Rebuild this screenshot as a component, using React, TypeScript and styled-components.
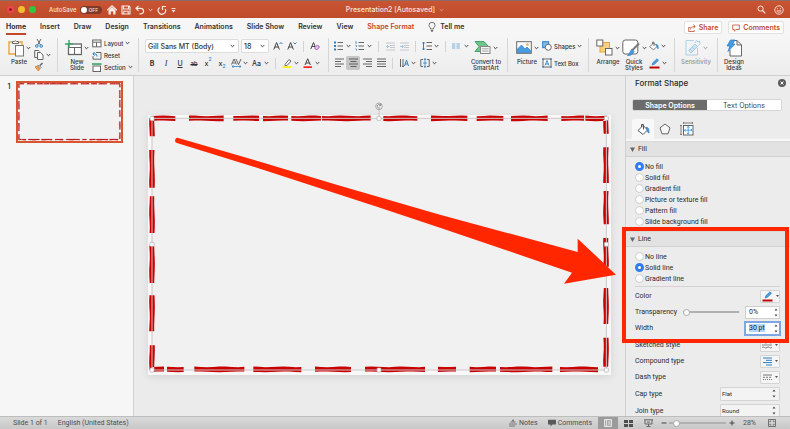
import React, { useEffect, useRef, useState } from "react";
import styled, { createGlobalStyle, css } from "styled-components";

const ui = `Inter, "Liberation Sans", sans-serif`;
const panelFont = `Roboto, "Liberation Sans", sans-serif`;

const GlobalStyle = createGlobalStyle`
  *, *::before, *::after { box-sizing: border-box; }
  body { margin: 0; background: #ebebeb; font-family: ${ui}; color: #333; }
  button, input, select { font: inherit; color: inherit; margin: 0; }
  button { border: 0; padding: 0; background: none; cursor: default; }
  svg { display: block; flex: none; }
`;

/* ---------- shell ---------- */

const Window = styled.div`
  display: flex;
  flex-direction: column;
  height: 100vh;
  overflow: hidden;
  white-space: nowrap;
`;

const TitleBar = styled.header`
  display: grid;
  grid-template-columns: 1fr auto 1fr;
  align-items: center;
  height: 18px;
  flex: none;
  padding: 0 6px;
  border-top: 1px solid #8d6c66;
  background: linear-gradient(#c95433, #bf4b2b);
  color: #f8e3dc;
  font-size: 7px;
`;

const TitleSide = styled.div<{ $end?: boolean }>`
  display: flex;
  align-items: center;
  gap: ${(p) => (p.$end ? 8 : 4)}px;
  justify-content: ${(p) => (p.$end ? "flex-end" : "flex-start")};
`;

const TitleText = styled.h1`
  display: flex;
  align-items: center;
  gap: 4px;
  margin: 0;
  font-size: 7px;
  font-weight: 500;
`;

const Lights = styled.div`
  display: flex;
  gap: 4px;
  margin: 0 9px 0 1px;
`;

const Light = styled.button<{ $color: string }>`
  display: grid;
  place-items: center;
  width: 7px;
  height: 7px;
  border-radius: 50%;
  background: ${(p) => p.$color};
`;

const SwitchLabel = styled.label`
  display: flex;
  align-items: center;
  gap: 3px;
  font-size: 6px;
  font-weight: 500;
  margin-right: 1px;
`;

const Switch = styled.span`
  display: flex;
  align-items: center;
  gap: 2px;
  width: 22px;
  height: 8px;
  padding: 0 1px;
  border-radius: 4px;
  background: #7f3a28;
  color: #f3d9d0;
  font-size: 5px;
  font-weight: 600;
`;

const SwitchInput = styled.input`
  appearance: none;
  width: 6px;
  height: 6px;
  border-radius: 50%;
  background: #fff;
`;

const TitleButton = styled.button`
  display: flex;
  align-items: center;
  gap: 3px;
`;

const TabBar = styled.nav`
  display: flex;
  align-items: center;
  height: 18px;
  flex: none;
  padding: 0 6px;
  gap: 14px;
  background: #f6f6f6;
  font-size: 7px;
  font-weight: 600;
`;

const Tab = styled.a<{ $active?: boolean; $accent?: boolean }>`
  display: flex;
  align-items: center;
  gap: 4px;
  height: 15px;
  margin-top: 1px;
  color: ${(p) => (p.$accent ? "#c2492b" : "#333")};
  font-weight: ${(p) => (p.$active ? 700 : 600)};
  text-decoration: none;
  border-bottom: 2px solid ${(p) => (p.$active ? "#c2492b" : "transparent")};
`;

const TabActions = styled.div`
  display: flex;
  gap: 6px;
  margin-left: auto;
`;

const PillButton = styled.button`
  display: flex;
  align-items: center;
  gap: 3px;
  height: 13px;
  margin-top: 1px;
  padding: 0 3px;
  border: 1px solid #e2e2e2;
  border-radius: 2px;
  background: #fff;
  color: #c2492b;
  font-weight: 600;
`;

/* ---------- ribbon ---------- */

const Ribbon = styled.div`
  display: flex;
  height: 40px;
  flex: none;
  padding: 1px 6px 2px;
  background: linear-gradient(#f6f6f6, #ededed);
  border-bottom: 1px solid #cfcfcf;
  font-size: 6px;
  font-weight: 500;
`;

const Divider = styled.i`
  width: 1px;
  height: 34px;
  flex: none;
  margin: 1px 6px;
  background: #d6d6d6;
`;

const MiniDivider = styled.i`
  width: 1px;
  height: 11px;
  flex: none;
  margin: 0 4px;
  background: #d3d3d3;
`;

const BigButton = styled.button<{ $width: number; $faded?: boolean }>`
  display: flex;
  flex-direction: column;
  align-items: center;
  width: ${(p) => p.$width}px;
  flex: none;
  padding-top: 1px;
  line-height: 6px;
  ${(p) => p.$faded && css`opacity: 0.5;`}
`;

const BigTop = styled.span`
  display: flex;
  align-items: center;
  gap: 2px;
  height: 19px;
  margin-bottom: 2px;
`;

const Stack = styled.div<{ $rows?: 2 | 3; $width: number }>`
  display: flex;
  flex-direction: column;
  gap: ${(p) => (p.$rows === 2 ? 1 : 0)}px;
  width: ${(p) => p.$width}px;
  flex: none;
  margin-left: 2px;
  padding-top: ${(p) => (p.$rows === 2 ? 1 : 0)}px;
`;

const StackButton = styled.button<{ $tall?: boolean }>`
  display: flex;
  align-items: center;
  gap: 2px;
  height: ${(p) => (p.$tall ? 16 : 12)}px;
`;

const Rows = styled.div<{ $pull?: boolean }>`
  display: flex;
  flex-direction: column;
  gap: 1px;
  flex: none;
  padding-top: 1px;
  margin-left: ${(p) => (p.$pull ? -3 : 0)}px;
`;

const Row = styled.div`
  display: flex;
  align-items: center;
  height: 16px;
`;

const Tool = styled.button<{ $wide?: boolean; $active?: boolean }>`
  display: flex;
  align-items: center;
  justify-content: ${(p) => (p.$wide ? "space-between" : "center")};
  width: ${(p) => (p.$wide ? 21 : 14)}px;
  height: 14px;
  padding: 0 ${(p) => (p.$wide ? 2 : 0)}px;
  border-radius: 2px;
  background: ${(p) => (p.$active ? "#c6c6c6" : "none")};
  font-size: 7px;
`;

const Combo = styled.span<{ $width: number }>`
  display: flex;
  align-items: center;
  position: relative;
  width: ${(p) => p.$width}px;
  height: 14px;
  margin-right: 2px;
  border: 1px solid #dcdcdc;
  border-radius: 2px;
  background: #fff;
  font-size: 7px;
`;

const ComboSelect = styled.select`
  appearance: none;
  width: 100%;
  height: 12px;
  padding: 0 2px;
  border: 0;
  background: none;
  outline: none;
`;

const ComboMark = styled.span`
  position: absolute;
  right: 3px;
  pointer-events: none;
`;

const Bold = styled.b`font-weight: 700;`;
const Italic = styled.i`font-family: "Liberation Serif", serif; font-size: 8px;`;
const Under = styled.u`text-underline-offset: 1px;`;
const Strike = styled.s`font-size: 6px;`;
const Small = styled.span<{ $low?: boolean }>`
  color: #2d7fc4;
  font-size: 5px;
  align-self: ${(p) => (p.$low ? "flex-end" : "flex-start")};
  line-height: 7px;
`;

/* ---------- work area ---------- */

const Work = styled.main`
  display: flex;
  flex: 1;
  min-height: 0;
  overflow: hidden;
`;

const Thumbs = styled.aside`
  display: flex;
  align-items: flex-start;
  gap: 4px;
  width: 134px;
  flex: none;
  padding: 5px 10px 0 6px;
  border-right: 1px solid #d2d2d2;
  background: #f6f6f6;
  font-size: 7px;
  font-weight: 600;
`;

const ThumbNumber = styled.span`
  width: 6px;
  margin-top: 1px;
  text-align: center;
`;

const Thumb = styled.button`
  flex: 1;
  border: 2px solid #d9552f;
  background: #f1f1f1;
`;

const Canvas = styled.section`
  display: flex;
  align-items: center;
  flex: 1;
  min-width: 0;
  padding: 0 14px 2px;
  background: #ebebeb;
`;

const Slide = styled.div`
  position: relative;
  z-index: 2;
  flex: 1;
  background: #f1f1f1;
  border-radius: 1px;
  box-shadow: 0 2px 8px rgba(0, 0, 0, 0.1);
`;

const SlideArt = styled.svg`
  width: 100%;
  height: auto;
  overflow: visible;
`;

/* ---------- format panel ---------- */

const Panel = styled.aside`
  width: 165px;
  flex: none;
  border-left: 1px solid #d0d0d0;
  background: #ececec;
  font-family: ${panelFont};
  font-size: 7px;
  color: #2b2b2b;
`;

const PanelHead = styled.div`
  display: flex;
  align-items: center;
  justify-content: space-between;
  height: 14px;
  padding: 0 4px 0 9px;
`;

const PanelTitle = styled.h2`
  margin: 0;
  font-family: ${ui};
  font-size: 8px;
  font-weight: 500;
`;

const Segments = styled.div`
  display: flex;
  height: 12px;
  margin: 9px 8px 8px 6px;
  border: 1px solid #d5d5d5;
  border-radius: 2px;
  background: #fff;
  overflow: hidden;
`;

const Segment = styled.button<{ $active?: boolean }>`
  flex: 1;
  font-family: ${ui};
  font-weight: ${(p) => (p.$active ? 600 : 400)};
  background: ${(p) => (p.$active ? "#6c6c6c" : "#fff")};
  color: ${(p) => (p.$active ? "#fff" : "#444")};
`;

const IconTabs = styled.div`
  display: flex;
  height: 22px;
  padding-left: 6px;
  border-bottom: 2px solid #f8f8f8;
`;

const IconTab = styled.button<{ $active?: boolean }>`
  display: grid;
  place-items: center;
  width: 22px;
  border-radius: 2px 2px 0 0;
  background: ${(p) => (p.$active ? "#f8f8f8" : "none")};
`;

const SectionHead = styled.button`
  display: flex;
  align-items: center;
  gap: 3px;
  width: 100%;
  height: 16px;
  padding-left: 4px;
  border-top: 1px solid #d9d9d9;
  border-bottom: 1px solid #d0d0d0;
  background: #e2e2e2;
  font-size: 7px;
`;

const Radios = styled.div`
  display: flex;
  flex-direction: column;
  padding: 4px 0 4px 9px;
`;

const RadioLabel = styled.label`
  display: flex;
  align-items: center;
  gap: 1px;
  height: 11px;
`;

const Radio = styled.input`
  appearance: none;
  width: 9px;
  height: 9px;
  border: 1px solid #cdcdcd;
  border-radius: 50%;
  background: #fff;
  &:checked {
    border: 3px solid #2f7df6;
  }
`;

const LineSection = styled.section`
  position: relative;
  margin-bottom: 1px;
`;

const Highlight = styled.div`
  position: absolute;
  inset: -4px 1px -7px -4px;
  border: 4px solid #ff2600;
  pointer-events: none;
`;

const Rule = styled.hr`
  height: 1px;
  margin: -2px 10px 1px 9px;
  border: 0;
  background: #d3d3d3;
`;

const Field = styled.div<{ $tall?: boolean }>`
  display: flex;
  align-items: center;
  justify-content: space-between;
  gap: 6px;
  height: ${(p) => (p.$tall ? 17 : 16)}px;
  padding: 0 10px 0 9px;
`;

const Swatch = styled.button`
  display: flex;
  align-items: center;
  justify-content: center;
  gap: 3px;
  width: 20px;
  height: 13px;
  border: 1px solid #d4d4d4;
  border-radius: 1px;
  background: #f5f5f5;
`;

const PickWrap = styled.span`
  display: flex;
  align-items: center;
  position: relative;
  width: 60px;
  height: 14px;
  border: 1px solid #d4d4d4;
  border-radius: 1px;
  background: #f3f3f3;
`;

const Pick = styled(ComboSelect)`
  font-size: 6px;
  padding: 0 1px;
`;

const Spin = styled.span<{ $focus?: boolean }>`
  display: flex;
  align-items: center;
  width: 35px;
  height: 13px;
  flex: none;
  border: 1px solid #cfcfcf;
  background: #fff;
  ${(p) => p.$focus && css`border-color: #7ea6e6; box-shadow: 0 0 0 1px #7ea6e6;`}
`;

const SpinInput = styled.input`
  flex: 1;
  min-width: 0;
  height: 9px;
  padding: 0 0 0 3px;
  border: 0;
  outline: none;
  background: none;
  &::selection {
    background: #b2d6fd;
    color: #222;
  }
`;

const Stepper = styled.button`
  margin-right: 1px;
`;

const Range = styled.input<{ $fill?: boolean }>`
  appearance: none;
  flex: ${(p) => (p.$fill ? "1" : "none")};
  width: 57px;
  min-width: 0;
  height: 7px;
  background: linear-gradient(#b0b0b0, #b0b0b0) center / 100% 2px no-repeat;
  &::-webkit-slider-thumb {
    appearance: none;
    width: 7px;
    height: 7px;
    border: 1px solid #a9a9a9;
    border-radius: 50%;
    background: #fff;
  }
`;

/* ---------- status bar ---------- */

const StatusBar = styled.footer`
  display: flex;
  align-items: center;
  height: 13px;
  flex: none;
  padding: 0 14px 0 13px;
  border-top: 1px solid #bdbdbd;
  background: linear-gradient(#dadada, #c8c8c8);
  font-family: ${panelFont};
  font-size: 7px;
  color: #4d4d4d;
`;

const StatusGroup = styled.div`
  display: flex;
  align-items: center;
  gap: 10px;
  margin-right: 6px;
`;

const StatusItem = styled.button`
  display: flex;
  align-items: center;
  gap: 2px;
`;

const StatusTools = styled.div`
  display: flex;
  align-items: center;
  height: 100%;
  margin-left: auto;
`;

const ViewButton = styled.button<{ $active?: boolean }>`
  display: grid;
  place-items: center;
  width: 20px;
  height: 100%;
  background: ${(p) => (p.$active ? "#9b9b9b" : "none")};
`;

const ZoomValue = styled.output`
  margin: 0 12px 0 6px;
`;

const ZoomStep = styled.button`
  width: 11px;
  display: grid;
  place-items: center;
`;

/* ---------- icons ---------- */

const Chevron = ({ color = "#444" }: { color?: string }) => (
  <svg width="5" height="4" viewBox="0 0 5 4" fill="none" stroke={color}>
    <path d="M.7 1l1.8 1.8L4.3 1" />
  </svg>
);
const Caret = () => (
  <svg width="3" height="2" viewBox="0 0 3 2"><path d="M0 0h3L1.5 2z" fill="#555" /></svg>
);
const UpDown = () => (
  <svg width="4" height="9" viewBox="0 0 4 9" fill="#444">
    <path d="M2 .6l1.5 2h-3zM2 8.4l1.5-2h-3z" />
  </svg>
);
const Line = ({ w = 10, h = 10, color = "#666", children }: any) => (
  <svg width={w} height={h} viewBox={`0 0 ${w} ${h}`} fill="none" stroke={color}>{children}</svg>
);

const PasteIcon = () => (
  <Line w={16} h={18}>
    <path d="M4 3H1v12h6M11 3h3v3" stroke="#eda33b" strokeWidth="1.4" />
    <path d="M4.5 4.5v-2h2a1.2 1.2 0 012 0h2v2z" fill="#fff" />
    <rect x="7.5" y="6.5" width="8" height="10.5" fill="#fff" stroke="#777" />
  </Line>
);
const CutIcon = () => (
  <Line><path d="M3 1l3.5 6M7 1L3.5 7" /><circle cx="2.8" cy="8" r="1.3" stroke="#2d7fc4" /><circle cx="7.2" cy="8" r="1.3" stroke="#2d7fc4" /></Line>
);
const CopyIcon = () => (
  <Line><path d="M3 7.5H.7v-7h4l1 1" /><path d="M3.5 2.5h3l2.5 2.500v4.500h-5.500z" fill="#fff" /></Line>
);
const BrushIcon = () => (
  <Line><path d="M6 3.500L8.500 1" strokeWidth="1.600" /><path d="M4.500 3l2.500 2.500-1 1L3.500 4z" fill="#fff" /><path d="M1 5l2-.8L5.500 7 4.500 9z" fill="#f4a24f" stroke="#e08a30" /></Line>
);
const NewSlideIcon = () => (
  <Line w={17} h={18}>
    <rect x="3.500" y="5" width="13" height="10.500" fill="#fff" strokeWidth="1.300" />
    <path d="M4 8.500h12M9.500 8.500V15" />
    <path d="M4 1v8M0 5h8" stroke="#35a76a" strokeWidth="1.400" />
  </Line>
);
const LayoutIcon = () => (
  <Line w={10} h={9}><rect x=".7" y="1" width="8.300" height="6.800" fill="#fff" /><path d="M1 3.200h8M4.500 3.200V8" /></Line>
);
const ResetIcon = () => (
  <Line w={10} h={9}><path d="M4 1.500h5v6.700H1V5" /><path d="M5 5.500C5 3 3.500 2.500 1 3M2.500 1L.8 3l2 1.500" stroke="#2d7fc4" /></Line>
);
const SectionIcon = () => (
  <Line w={10} h={9}><path d="M0 1h9.500" stroke="#35a76a" strokeWidth="1.600" /><rect x="1" y="3" width="7.500" height="5.500" fill="#fff" /></Line>
);
const GrowIcon = ({ down }: { down?: boolean }) => (
  <Line><path d="M.8 8.500L3.600 1.500l2.800 7M1.800 6h3.600" stroke="#444" /><path d={down ? "M6.500 1.500L8 3l1.500-1.500" : "M6.500 3L8 1.500 9.500 3"} stroke="#2d7fc4" /></Line>
);
const ClearIcon = () => (
  <Line><path d="M.8 8L3.500 1.500 5 5M1.800 5.500H5" stroke="#444" /><path d="M4.500 7L7.500 4 9.500 6 6.500 9z" stroke="#a453b8" fill="#e5c6ec" /></Line>
);
const HighlightIcon = () => (
  <Line><path d="M3 6.500L7 1.500l2 1.500-4 4.500H3z" stroke="#666" fill="#fff" /><path d="M.5 9.200h8.500" stroke="#fff200" strokeWidth="1.800" /></Line>
);
const FontColorIcon = () => (
  <Line><path d="M2 7L4.700.8 7.400 7M3 5h3.500" stroke="#444" /><path d="M.5 9.200h8.500" stroke="#f22" strokeWidth="1.800" /></Line>
);
const SpacingIcon = () => (
  <Line w={11}><path d="M.5 6.500L3 1l2.500 5.500M1.500 5h3M5 1l2.500 5.500L10 1" stroke="#444" strokeWidth=".8" /><path d="M1 8.500h9M2.500 7.200L1 8.500l1.500 1M8.500 7.200l1.500 1.300-1.500 1" stroke="#2d7fc4" strokeWidth=".8" /></Line>
);
const BulletsIcon = () => (
  <Line><path d="M0 1.500h2M0 5h2M0 8.500h2" stroke="#2d7fc4" strokeWidth="1.800" /><path d="M3.500 1.500H9M3.500 5H9M3.500 8.500H9" /></Line>
);
const NumbersIcon = () => (
  <Line><path d="M1 0v3M.5 4.500h1V6M.5 8h1v1.500" stroke="#2d7fc4" strokeWidth=".8" /><path d="M3.500 1.500H9M3.500 5H9M3.500 8.500H9" /></Line>
);
const IndentIcon = ({ flip }: { flip?: boolean }) => (
  <Line w={9} h={9} color="#c4c8cc"><path d="M0 1h9M4 3.500h5M4 5.500h5M0 8h9" /><path d={flip ? "M0 4.500h3M2 3l1.500 1.500L2 6" : "M3.500 4.500H.5M2 3L.5 4.500 2 6"} stroke="#9ec6e4" /></Line>
);
const LineSpacingIcon = () => (
  <Line><path d="M1.500 1v8M.2 2.500L1.500 1l1.300 1.500M.2 7.500L1.500 9l1.300-1.500" stroke="#2d7fc4" /><path d="M4.500 1.500H10M4.500 5H10M4.500 8.500H10" /></Line>
);
const ColumnsIcon = () => (
  <Line w={8} h={8} color="#6ba6d6"><path d="M0 2h3.300M0 4h3.300M0 6h3.300M4.500 2h3.300M4.500 4h3.300M4.500 6h3.300" strokeWidth=".9" /></Line>
);
const AlignIcon = ({ kind }: { kind: "l" | "c" | "r" | "j" }) => {
  const d = {
    l: "M0 1h9M0 3.500h6M0 6h9M0 8.500h6",
    c: "M0 1h9M1.500 3.500h6M0 6h9M1.500 8.500h6",
    r: "M0 1h9M3 3.500h6M0 6h9M3 8.500h6",
    j: "M0 1h9M0 3.500h9M0 6h9M0 8.500h9",
  }[kind];
  return <Line w={9} color="#555"><path d={d} strokeWidth=".9" /></Line>;
};
const DirectionIcon = () => (
  <Line><path d="M1.500 1v8M4 1v8M2.800 7.800L4 9l1.200-1.200" /><path d="M5.500 8L7.500 2l2 6M6.200 6h2.600" stroke="#2d7fc4" /></Line>
);
const AlignTextIcon = () => (
  <Line><path d="M3 1.500H.8v7H3M7 1.500h2.200v7H7" /><path d="M5 0v10M3 5h4M3.800 2L5 .8 6.200 2M3.800 8L5 9.200 6.200 8" stroke="#2d7fc4" strokeWidth=".8" /></Line>
);
const SmartArtIcon = () => (
  <Line w={17} h={15}>
    <path d="M1 1.500h9l4.500 5-4.500 5H1l4-5z" fill="#6fc48c" stroke="#3fa365" />
    <rect x="6.500" y="6.500" width="9.500" height="7" fill="#f4f4f4" stroke="#888" />
    <path d="M8 8.800h6.500M8 11h6.500" stroke="#aaa" />
  </Line>
);
const PictureIcon = () => (
  <Line w={16} h={13}>
    <rect x=".7" y=".7" width="14.600" height="11.600" fill="#fff" />
    <path d="M1.500 11.500V8L5.500 4l3.500 4 2-2 3.500 3.500v2z" fill="#4a9ce0" stroke="#2d7fc4" strokeWidth=".7" />
    <circle cx="11.500" cy="3.500" r="1.300" fill="#f3a64a" stroke="none" />
  </Line>
);
const ShapesIcon = () => (
  <Line><rect x=".7" y=".7" width="6" height="6" fill="#7db9ea" stroke="#2d7fc4" /><circle cx="6.300" cy="6.300" r="3" fill="#fff" /></Line>
);
const TextBoxIcon = () => (
  <Line><rect x="1" y="1" width="8" height="8" fill="#fff" /><path d="M3 7.500L5 2.500l2 5M3.700 6h2.600" stroke="#2d7fc4" strokeWidth=".9" /><path d="M0 1h2M8 1h2M0 9h2M8 9h2" stroke="#2d7fc4" /></Line>
);
const ArrangeIcon = () => (
  <Line w={17} h={17}>
    <rect x="4" y="3.500" width="9.500" height="9.500" fill="#f8cf85" stroke="#eda33b" />
    <rect x=".8" y="1" width="6" height="6" fill="#fff" /><rect x="9.500" y="9.500" width="6.500" height="6.500" fill="#fff" />
  </Line>
);
const StylesIcon = () => (
  <Line w={18} h={18}>
    <rect x=".8" y="1" width="15" height="14" rx="2.500" fill="#fff" />
    <path d="M17 4.500L9.500 12" stroke="#777" strokeWidth="2" />
    <path d="M10 10.500l2 2c-1.500 3.500-4 4-6.500 4 2.500-1.500 2-4.500 4.500-6z" fill="#4a9ce0" stroke="#2d7fc4" strokeWidth=".8" />
  </Line>
);
const BucketIcon = ({ w = 10 }: { w?: number }) => (
  <svg width={w} height={w} viewBox="0 0 13 13" fill="none" stroke="#555">
    <path d="M1 7.500L6 2.500l4.500 4.500-4.500 4.500zM4.500 4V1.500h2v5" fill="#fff" />
    <path d="M9 4.500c2.500-.5 3 1.500 3 5.500-1.500 0-1.500-2.500-2-3.500z" fill="#4a9ce0" stroke="#2d7fc4" strokeWidth=".8" />
  </svg>
);
const PenIcon = ({ color = "#c00000" }: { color?: string }) => (
  <Line w={11} h={11}>
    <path d="M3 7l1-2.500L8 .8l1.500 1.500L5.500 6.200z" fill="#4a9ce0" stroke="#2d7fc4" strokeWidth=".7" />
    <path d="M.5 9.500h10" stroke={color} strokeWidth="2" />
  </Line>
);
const SensitivityIcon = () => (
  <Line w={16} h={17} color="#5aa9dc">
    <path d="M9 1.500H1v14.500h11.500V9" strokeWidth=".9" />
    <path d="M3.500 11.500L10 5l2.500 2.500L6 14z" fill="#a9d2ee" />
    <path d="M10 4l1.500-2.500L13 3l1.500-1 .5 2.500-1.500 2" /><path d="M5 10l3 3M7 8l3 3" strokeWidth=".7" />
  </Line>
);
const IdeasIcon = () => (
  <Line w={17} h={18}>
    <path d="M6.500 4.500V1.500H11l4.500 4.500v11H4V11M11 1.500V6h4.500" fill="#fff" />
    <path d="M4.500 1H9L6.500 5H9L2 12.500 4 7H1z" fill="#4a9ce0" stroke="#2d7fc4" strokeWidth=".8" />
  </Line>
);
const HomeIcon = () => (
  <Line color="#fbe9e3"><path d="M0 5.300L5 .9l5 4.400" strokeWidth="1.200" /><path d="M1.500 5L5 2l3.500 3v4.500H6.200v-3H3.800v3H1.500z" fill="#fbe9e3" stroke="none" /></Line>
);
const SaveIcon = () => (
  <Line color="#fbe9e3"><path d="M1 1h7l1 1v7H1zM2.500 1v3h5V1M2.800 9V6.300h4.400V9" strokeWidth="1.100" /></Line>
);
const UndoIcon = () => (
  <Line color="#fbe9e3"><path d="M3.500.8L1 3.300l2.500 2.500M1.200 3.300h4.300c4 0 4 5.500.5 5.500H4.500" strokeWidth="1.200" /></Line>
);
const RedoIcon = () => (
  <Line color="#fbe9e3"><path d="M2.700 2.500A3.700 3.700 0 108.300 4M5.500 5V1.500H9" strokeWidth="1.200" /></Line>
);
const MoreIcon = () => (
  <Line w={5} h={6} color="#fbe9e3"><path d="M.5 1.500h4" strokeWidth=".9" /><path d="M.5 3h4l-2 2.500z" fill="#fbe9e3" stroke="none" /></Line>
);
const SearchIcon = () => (
  <Line w={9} h={9} color="#fbe9e3"><circle cx="3.600" cy="3.600" r="2.600" /><path d="M5.500 5.500L8.300 8.300" strokeWidth="1.200" /></Line>
);
const SmileIcon = () => (
  <Line color="#fbe9e3"><circle cx="5" cy="5" r="4.200" strokeWidth=".9" /><path d="M2.800 5.800c.6 2 3.800 2 4.400 0zM3.500 3v1.200M6.500 3v1.200" strokeWidth=".8" /></Line>
);
const BulbIcon = () => (
  <Line w={8} color="#555"><path d="M2.700 7C2.700 5.500 1 5 1 3.300a3 3 0 016 0C7 5 5.300 5.500 5.300 7zM2.700 8.500h2.600M3.200 9.600h1.600" strokeWidth=".8" /></Line>
);
const ShareIcon = () => (
  <Line w={8} h={8} color="#c2492b"><path d="M2.500 3.500H.7v4h5.500V6M2.500 5.500C2.500 3.500 4 2.500 7 2.500M5.300.7l2 1.800-2 1.800" strokeWidth=".8" /></Line>
);
const BubbleIcon = () => (
  <Line w={8} h={8} color="#c2492b"><path d="M.7 1h6.600v4.500H4L2.300 7.200V5.500H.7z" strokeWidth=".8" /></Line>
);
const CloseIcon = () => (
  <svg width="8" height="8" viewBox="0 0 8 8"><circle cx="4" cy="4" r="4" fill="#5b5b5b" /><path d="M2.500 2.500l3 3M5.500 2.500l-3 3" stroke="#fff" /></svg>
);
const PentagonIcon = () => (
  <Line w={12} h={12} color="#555"><path d="M6 1l5 3.800-2 6H3l-2-6z" fill="#f6f6f6" strokeWidth=".9" /></Line>
);
const SizeIcon = () => (
  <Line w={14} h={14}>
    <path d="M3.500 1h9M3.500 0v2M12.500 0v2M1 3.500v9M0 3.500h2M0 12.500h2" strokeWidth=".8" />
    <rect x="3.500" y="3.500" width="9.500" height="9.500" fill="#fff" />
    <path d="M8.200 4.500v7.500M4.500 8.200h7.500M7 5.500l1.200-1 1.200 1M7 11l1.200 1 1.200-1M5.500 7l-1 1.200 1 1.200M11 7l1 1.200-1 1.200" stroke="#2d8fe0" strokeWidth=".8" />
  </Line>
);
const Triangle = () => (
  <svg width="5" height="5" viewBox="0 0 5 5"><path d="M0 .5h5L2.500 5z" fill="#666" /></svg>
);
const SketchIcon = () => (
  <Line w={10} h={8} color="#666"><path d="M0 1.500q1.200-1 2.500 0t2.500 0 2.500 0 2.500 0M0 4h10M0 6.500q1.200-1 2.500 0t2.500 0 2.500 0 2.500 0" strokeWidth=".8" /></Line>
);
const CompoundIcon = () => (
  <Line w={9} h={9} color="#2d7fc4"><path d="M0 1h9M3 3.300h6M0 5.600h9M3 8h6" strokeWidth="1" /></Line>
);
const DashIcon = () => (
  <Line w={9} h={7} color="#777"><path d="M0 1h9" /><path d="M0 3.300h9" strokeDasharray="2 1" /><path d="M0 5.500h9" strokeDasharray="1 1" /></Line>
);
const NotesIcon = () => (
  <Line w={8} h={8} color="#777"><path d="M0 5h8M0 7h6M1.500 3h5" /><path d="M4 0l1.500 2.500h-3z" fill="#777" stroke="none" /></Line>
);
const SolidBubble = () => (
  <svg width="8" height="8" viewBox="0 0 8 8"><path d="M0 .8h8v4.700H4.500L2.500 7.500v-2H0z" fill="#5a5a5a" /></svg>
);
const NormalView = () => (
  <Line w={8} h={8} color="#fff"><rect x=".7" y=".7" width="6.600" height="6.600" strokeWidth=".9" /><path d="M2.700 1v6M4 3h2.500M4 5h2.500" strokeWidth=".8" /></Line>
);
const SorterView = () => (
  <svg width="9" height="7" viewBox="0 0 9 7"><path d="M0 0h4v3H0zM5 0h4v3H5zM0 4h4v3H0zM5 4h4v3H5z" fill="#4f4f4f" /></svg>
);
const ShowView = () => (
  <Line w={9} h={8} color="#5a5a5a"><path d="M0 .8h9M1 1v4h7V1M4.500 5v2M2.500 7.500h4M3 3h3" strokeWidth=".9" /></Line>
);
const FitIcon = () => (
  <Line w={8} h={8} color="#5a5a5a"><rect x=".6" y=".6" width="6.800" height="6.800" strokeWidth=".8" /><path d="M2 3.200V2h1.200M4.800 2H6v1.200M6 4.800V6H4.800M3.200 6H2V4.800" strokeWidth=".8" /></Line>
);

/* ---------- slide drawing (three units per pixel) ---------- */

const TOP = [[33, 106], [147, 251], [280, 357], [369, 444], [454, 543], [546, 692], [730, 832], [873, 982], [1010, 1090], [1113, 1223], [1264, 1332], [1336, 1400]];
const BOTTOM = [[36, 72], [81, 131], [163, 313], [340, 484], [525, 633], [675, 855], [894, 948], [989, 1068], [1080, 1237], [1260, 1374]];
const LEFT = [[55, 109], [150, 263], [289, 399], [437, 549], [586, 694], [736, 810]];
const RIGHT = [[60, 101], [142, 249], [273, 373], [414, 500], [564, 672], [713, 800]];
const HANDLES = [[36, 55], [717, 55], [1399, 55], [36, 433], [1399, 433], [36, 810], [717, 810], [1399, 810]];

/** A hand-drawn bar between two points of an axis, with slightly uneven sides. */
function bar(from: number, to: number, center: number, vertical: boolean) {
  const upper: string[] = [];
  const lower: string[] = [];
  const steps = Math.max(2, Math.round((to - from) / 18));
  for (let i = 0; i <= steps; i++) {
    const at = from + ((to - from) * i) / steps;
    const a = center - 7.5 + Math.sin(at * 0.07);
    const b = center + 7.5 + Math.sin(at * 0.05 + 2);
    upper.push(vertical ? `${a} ${at}` : `${at} ${a}`);
    lower.unshift(vertical ? `${b} ${at}` : `${at} ${b}`);
  }
  return `M${upper.concat(lower).join("L")}Z`;
}

const BORDER = [
  ...TOP.map(([a, b]) => bar(a, b, 55, false)),
  ...BOTTOM.map(([a, b]) => bar(a, b, 808, false)),
  ...LEFT.map(([a, b]) => bar(a, b, 36, true)),
  ...RIGHT.map(([a, b]) => bar(a, b, 1398, true)),
].join("");

function SlideDrawing({ editing }: { editing?: boolean }) {
  return (
    <SlideArt viewBox="24 45 1389 780" aria-hidden="true">
      <path d="M24 45H1413V825H24z" fill="#f8f8f8" />
      <path d="M36 55H1399V810H36z" fill="#f1f1f1" />
      <path d={BORDER} fill={editing ? "#c80000" : "#bb1c20"} stroke={editing ? "none" : "#bb1c20"} strokeWidth="3" />
      {editing && (
        <>
          <path d="M36 55H1399V810H36zM717 55V30" fill="none" stroke="#cfc6c6" strokeWidth="3" />
          {HANDLES.map(([x, y]) => (
            <rect key={`${x}-${y}`} x={x - 6} y={y - 6} width="12" height="12" rx="2" fill="#fff" stroke="#aaa" strokeWidth="2" />
          ))}
          <circle cx="717" cy="19" r="10" fill="#f4f4f4" stroke="#999" strokeWidth="2.500" />
          <path d="M721 23a5.500 5.500 0 11 1-7M722 12v5h-5" fill="none" stroke="#666" strokeWidth="2" />
          <path
            d="M115 114L360 185L600 257L900 344L1313 456V416L1428 524L1272 551L1296 518L900 383L720 323L360 206L111 129A7 7 0 01115 114z"
            fill="#ff2600"
          />
        </>
      )}
    </SlideArt>
  );
}

/* ---------- composed parts ---------- */

const TABS = ["Home", "Insert", "Draw", "Design", "Transitions", "Animations", "Slide Show", "Review", "View"];
const FILLS = ["No fill", "Solid fill", "Gradient fill", "Picture or texture fill", "Pattern fill", "Slide background fill"];
const LINES = ["No line", "Solid line", "Gradient line"];

function RadioList({ name, options, initial }: { name: string; options: string[]; initial: string }) {
  const [value, setValue] = useState(initial);
  return (
    <Radios role="radiogroup" aria-label={name}>
      {options.map((o) => (
        <RadioLabel key={o}>
          <Radio type="radio" name={name} checked={value === o} onChange={() => setValue(o)} />
          {o}
        </RadioLabel>
      ))}
    </Radios>
  );
}

function BigTool({ icon, lines, width = 26, faded, menu = true }: { icon: React.ReactNode; lines: string[]; width?: number; faded?: boolean; menu?: boolean }) {
  return (
    <BigButton $width={width} $faded={faded}>
      <BigTop>{icon}{menu && <Chevron />}</BigTop>
      {lines.map((l) => <span key={l}>{l}</span>)}
    </BigButton>
  );
}

function MenuTool({ label, children }: { label: string; children: React.ReactNode }) {
  return <Tool $wide aria-label={label}>{children}<Chevron /></Tool>;
}

function RibbonBar() {
  return (
    <Ribbon>
      <BigTool icon={<PasteIcon />} lines={["Paste"]} />
      <Stack $width={17}>
        <StackButton aria-label="Cut"><CutIcon /></StackButton>
        <StackButton aria-label="Copy"><CopyIcon /><Chevron /></StackButton>
        <StackButton aria-label="Format painter"><BrushIcon /></StackButton>
      </Stack>
      <Divider />
      <BigTool icon={<NewSlideIcon />} lines={["New", "Slide"]} />
      <Stack $width={40}>
        <StackButton><LayoutIcon />Layout<Chevron /></StackButton>
        <StackButton><ResetIcon />Reset</StackButton>
        <StackButton><SectionIcon />Section<Chevron /></StackButton>
      </Stack>
      <Divider />
      <Rows>
        <Row>
          <Combo $width={94}>
            <ComboSelect aria-label="Font"><option>Gill Sans MT (Body)</option></ComboSelect>
            <ComboMark><Chevron /></ComboMark>
          </Combo>
          <Combo $width={28}>
            <ComboSelect aria-label="Font size"><option>18</option></ComboSelect>
            <ComboMark><Chevron /></ComboMark>
          </Combo>
          <Tool aria-label="Increase font size"><GrowIcon /></Tool>
          <Tool aria-label="Decrease font size"><GrowIcon down /></Tool>
          <MiniDivider />
          <Tool aria-label="Clear formatting"><ClearIcon /></Tool>
        </Row>
        <Row>
          <Tool><Bold>B</Bold></Tool>
          <Tool><Italic>I</Italic></Tool>
          <Tool><Under>U</Under></Tool>
          <Tool><Strike>ab</Strike></Tool>
          <Tool>x<Small>2</Small></Tool>
          <Tool>x<Small $low>2</Small></Tool>
          <MenuTool label="Character spacing"><SpacingIcon /></MenuTool>
          <MenuTool label="Change case">Aa</MenuTool>
          <MiniDivider />
          <MenuTool label="Text highlight"><HighlightIcon /></MenuTool>
          <MenuTool label="Font color"><FontColorIcon /></MenuTool>
        </Row>
      </Rows>
      <Divider />
      <Rows $pull>
        <Row>
          <MenuTool label="Bullets"><BulletsIcon /></MenuTool>
          <MenuTool label="Numbering"><NumbersIcon /></MenuTool>
          <MiniDivider />
          <Tool aria-label="Decrease indent"><IndentIcon /></Tool>
          <Tool aria-label="Increase indent"><IndentIcon flip /></Tool>
          <MiniDivider />
          <MenuTool label="Line spacing"><LineSpacingIcon /></MenuTool>
          <MiniDivider />
          <MenuTool label="Columns"><ColumnsIcon /></MenuTool>
        </Row>
        <Row>
          <Tool aria-label="Align left"><AlignIcon kind="l" /></Tool>
          <Tool aria-label="Center" $active><AlignIcon kind="c" /></Tool>
          <Tool aria-label="Align right"><AlignIcon kind="r" /></Tool>
          <Tool aria-label="Justify"><AlignIcon kind="j" /></Tool>
          <MiniDivider />
          <MenuTool label="Text direction"><DirectionIcon /></MenuTool>
          <MenuTool label="Align text"><AlignTextIcon /></MenuTool>
        </Row>
      </Rows>
      <BigTool width={30} icon={<SmartArtIcon />} lines={["Convert to", "SmartArt"]} />
      <Divider />
      <BigTool icon={<PictureIcon />} lines={["Picture"]} />
      <Stack $rows={2} $width={40}>
        <StackButton $tall><ShapesIcon />Shapes<Chevron /></StackButton>
        <StackButton $tall><TextBoxIcon />Text Box</StackButton>
      </Stack>
      <Divider />
      <BigTool icon={<ArrangeIcon />} lines={["Arrange"]} />
      <BigTool icon={<StylesIcon />} lines={["Quick", "Styles"]} />
      <Stack $rows={2} $width={19}>
        <StackButton $tall aria-label="Shape fill"><BucketIcon /><Chevron /></StackButton>
        <StackButton $tall aria-label="Shape outline"><PenIcon /><Chevron /></StackButton>
      </Stack>
      <Divider />
      <BigTool width={30} faded icon={<SensitivityIcon />} lines={["Sensitivity"]} />
      <Divider />
      <BigTool width={20} menu={false} icon={<IdeasIcon />} lines={["Design", "Ideas"]} />
    </Ribbon>
  );
}

function FormatPanel() {
  const width = useRef<HTMLInputElement>(null);
  useEffect(() => {
    width.current?.focus();
    width.current?.select();
  }, []);
  return (
    <Panel>
      <PanelHead>
        <PanelTitle>Format Shape</PanelTitle>
        <button aria-label="Close"><CloseIcon /></button>
      </PanelHead>
      <Segments>
        <Segment $active>Shape Options</Segment>
        <Segment>Text Options</Segment>
      </Segments>
      <IconTabs>
        <IconTab $active aria-label="Fill and line"><BucketIcon w={13} /></IconTab>
        <IconTab aria-label="Effects"><PentagonIcon /></IconTab>
        <IconTab aria-label="Size and properties"><SizeIcon /></IconTab>
      </IconTabs>
      <SectionHead><Triangle />Fill</SectionHead>
      <RadioList name="Fill" options={FILLS} initial="No fill" />
      <LineSection>
        <SectionHead><Triangle />Line</SectionHead>
        <RadioList name="Line" options={LINES} initial="Solid line" />
        <Rule />
        <Field>Color<Swatch aria-label="Line color"><PenIcon /><Caret /></Swatch></Field>
        <Field>
          <label htmlFor="transparency">Transparency</label>
          <Range $fill id="transparency" type="range" defaultValue={0} />
          <Spin>
            <SpinInput aria-label="Transparency percent" defaultValue="0%" />
            <Stepper aria-label="Step transparency"><UpDown /></Stepper>
          </Spin>
        </Field>
        <Field>
          <label htmlFor="line-width">Width</label>
          <Spin $focus>
            <SpinInput id="line-width" ref={width} defaultValue="30 pt" />
            <Stepper aria-label="Step width"><UpDown /></Stepper>
          </Spin>
        </Field>
        <Highlight />
      </LineSection>
      <Field>Sketched style<Swatch aria-label="Sketched style"><SketchIcon /><Caret /></Swatch></Field>
      <Field>Compound type<Swatch aria-label="Compound type"><CompoundIcon /><Caret /></Swatch></Field>
      <Field>Dash type<Swatch aria-label="Dash type"><DashIcon /><Caret /></Swatch></Field>
      <Field $tall>
        <label htmlFor="cap">Cap type</label>
        <PickWrap><Pick id="cap"><option>Flat</option></Pick><ComboMark><UpDown /></ComboMark></PickWrap>
      </Field>
      <Field $tall>
        <label htmlFor="join">Join type</label>
        <PickWrap><Pick id="join"><option>Round</option></Pick><ComboMark><UpDown /></ComboMark></PickWrap>
      </Field>
    </Panel>
  );
}

export default function App() {
  return (
    <Window>
      <GlobalStyle />
      <TitleBar>
        <TitleSide>
          <Lights>
            <Light $color="#ee4550" aria-label="Close window">
              <svg width="3" height="3" viewBox="0 0 3 3"><circle cx="1.500" cy="1.500" r="1.300" fill="#7c1016" /></svg>
            </Light>
            <Light $color="#f6bd2f" aria-label="Minimize" />
            <Light $color="#2fc840" aria-label="Full screen" />
          </Lights>
          <SwitchLabel>
            AutoSave
            <Switch><SwitchInput type="checkbox" role="switch" />OFF</Switch>
          </SwitchLabel>
          <TitleButton aria-label="Home"><HomeIcon /></TitleButton>
          <TitleButton aria-label="Save"><SaveIcon /></TitleButton>
          <TitleButton aria-label="Undo"><UndoIcon /><Chevron color="#f3d5cb" /></TitleButton>
          <TitleButton aria-label="Redo"><RedoIcon /></TitleButton>
          <TitleButton aria-label="More commands"><MoreIcon /></TitleButton>
        </TitleSide>
        <TitleText>Presentation2 [Autosaved]<Chevron color="#dd9783" /></TitleText>
        <TitleSide $end>
          <TitleButton aria-label="Search"><SearchIcon /></TitleButton>
          <TitleButton aria-label="Feedback"><SmileIcon /></TitleButton>
        </TitleSide>
      </TitleBar>
      <TabBar>
        {TABS.map((t) => <Tab key={t} href="#" $active={t === "Home"}>{t}</Tab>)}
        <Tab href="#" $accent>Shape Format</Tab>
        <Tab href="#"><BulbIcon />Tell me</Tab>
        <TabActions>
          <PillButton><ShareIcon />Share</PillButton>
          <PillButton><BubbleIcon />Comments</PillButton>
        </TabActions>
      </TabBar>
      <RibbonBar />
      <Work>
        <Thumbs>
          <ThumbNumber>1</ThumbNumber>
          <Thumb aria-label="Slide 1"><SlideDrawing /></Thumb>
        </Thumbs>
        <Canvas>
          <Slide><SlideDrawing editing /></Slide>
        </Canvas>
        <FormatPanel />
      </Work>
      <StatusBar>
        <StatusGroup>
          <StatusItem>Slide 1 of 1</StatusItem>
          <StatusItem>English (United States)</StatusItem>
        </StatusGroup>
        <StatusTools>
          <StatusGroup>
            <StatusItem><NotesIcon />Notes</StatusItem>
            <StatusItem><SolidBubble />Comments</StatusItem>
          </StatusGroup>
          <ViewButton $active aria-label="Normal view"><NormalView /></ViewButton>
          <ViewButton aria-label="Slide sorter"><SorterView /></ViewButton>
          <ViewButton aria-label="Slide show"><ShowView /></ViewButton>
          <ZoomStep aria-label="Zoom out"><Line w={6} h={6} color="#444"><path d="M.5 3h5" /></Line></ZoomStep>
          <Range type="range" aria-label="Zoom" defaultValue={8} />
          <ZoomStep aria-label="Zoom in"><Line w={6} h={6} color="#444"><path d="M.5 3h5M3 .5v5" /></Line></ZoomStep>
          <ZoomValue>28%</ZoomValue>
          <button aria-label="Fit to window"><FitIcon /></button>
        </StatusTools>
      </StatusBar>
    </Window>
  );
}
